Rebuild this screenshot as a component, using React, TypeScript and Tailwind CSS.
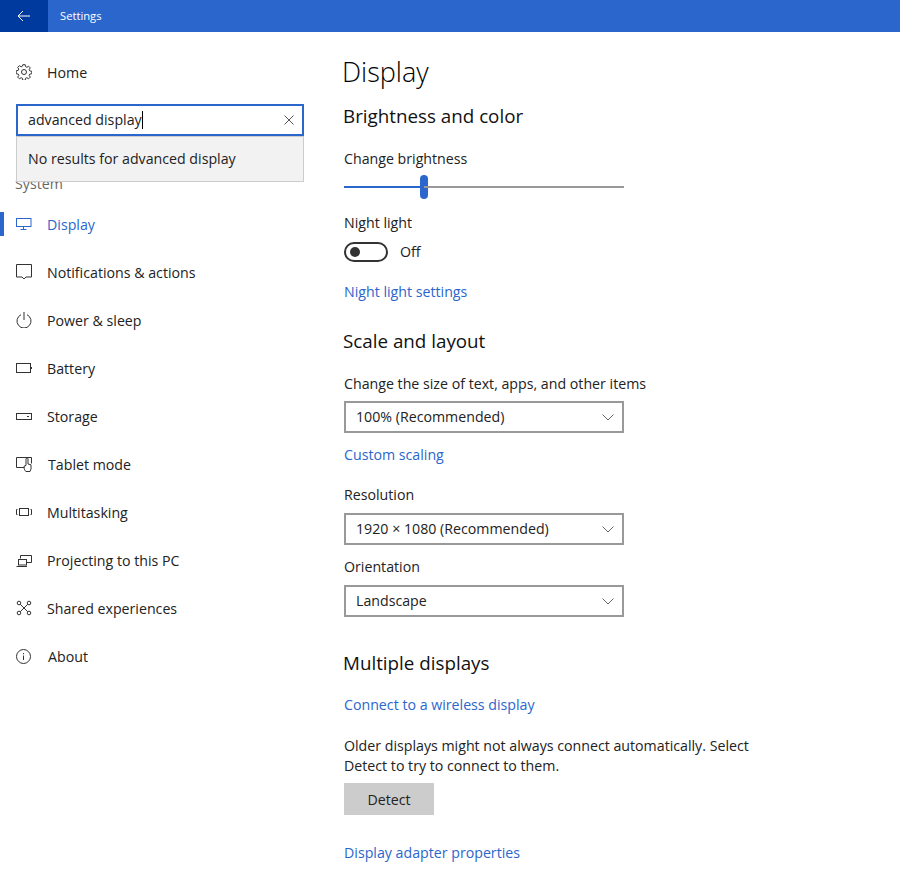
import type { ReactNode } from 'react';

const stroke = { fill: 'none', stroke: '#333', strokeWidth: 1 };

const icons: Record<string, ReactNode> = {
    display: (
        <g {...stroke} stroke="#2b66cc">
            <rect x="0.500" y="2.500" width="14.500" height="8" />
            <path d="M7.500 10.500v2.500M4.500 13.500h6" />
        </g>
    ),
    notifications: (
        <g {...stroke}>
            <path d="M.5.5h15V13H10l-2 2-2-2H.5z" />
        </g>
    ),
    power: (
        <g {...stroke}>
            <path d="M8 0v8M5 2.700a7 7 0 1 0 6 0" />
        </g>
    ),
    battery: (
        <g {...stroke}>
            <rect x="0.500" y="3.500" width="14" height="9" />
            <path d="M15.500 7v2" />
        </g>
    ),
    storage: (
        <g {...stroke}>
            <rect x="0.500" y="5.500" width="15" height="6" />
            <path d="M11 8.500h2" />
        </g>
    ),
    tablet: (
        <g {...stroke}>
            <path d="M8 11.500H.5v-10h15v6" />
            <path d="M10 15.500c-1-.8-1.800-2-1.800-3.200V10l1.800-.5V3a1 1 0 0 1 2 0v5l3 .8v4.200l-1 2.500z" fill="#fff" />
        </g>
    ),
    multitasking: (
        <g {...stroke}>
            <rect x="3.500" y="4.500" width="9" height="7" />
            <path d="M1.500 5.500h-1v5h1M14.500 5.500h1v5h-1" />
        </g>
    ),
    projecting: (
        <g {...stroke}>
            <path d="M4.500 6.500v-3h11v7h-5" />
            <rect x="2.500" y="7.500" width="8" height="5.500" fill="#fff" />
            <path d="M.5 14.500h10.500" />
        </g>
    ),
    shared: (
        <g {...stroke}>
            <circle cx="3" cy="3" r="1.800" />
            <circle cx="13" cy="3" r="1.800" />
            <circle cx="3" cy="13" r="1.800" />
            <circle cx="13" cy="13" r="1.800" />
            <path d="M4.300 4.300l7.400 7.400M11.700 4.300l-7.400 7.400" />
        </g>
    ),
    about: (
        <g {...stroke}>
            <circle cx="7.500" cy="8.500" r="7" />
            <path d="M7.500 7.500v4.500M7.500 5v1.200" />
        </g>
    ),
};

const navItems = [
    { id: 'display', label: 'Display', active: true },
    { id: 'notifications', label: 'Notifications & actions' },
    { id: 'power', label: 'Power & sleep' },
    { id: 'battery', label: 'Battery' },
    { id: 'storage', label: 'Storage' },
    { id: 'tablet', label: 'Tablet mode', nudge: true },
    { id: 'multitasking', label: 'Multitasking' },
    { id: 'projecting', label: 'Projecting to this PC' },
    { id: 'shared', label: 'Shared experiences' },
    { id: 'about', label: 'About', nudge: true },
];

const NavIcon = ({ id }: { id: string }) => (
    <svg viewBox="0 0 16 16" className="w-4 h-4 shrink-0">
        {icons[id]}
    </svg>
);

const GearIcon = () => (
    <svg viewBox="0 0 16 16" className="w-4 h-4 shrink-0" fill="none" stroke="#333" strokeWidth="1">
        <circle cx="8" cy="8" r="2.500" />
        <path d="M6.800.700h2.400l.4 2 1.300.6 1.700-1.100 1.700 1.700-1.100 1.700.6 1.300 2 .4v2.400l-2 .4-.6 1.300 1.100 1.700-1.700 1.700-1.700-1.100-1.300.6-.4 2H6.800l-.4-2-1.300-.6-1.700 1.100-1.700-1.700 1.100-1.700-.6-1.300-2-.4V6.800l2-.4.6-1.300-1.100-1.700 1.700-1.700 1.700 1.100 1.300-.6z" />
    </svg>
);

const Select = ({ value }: { value: string }) => (
    <div className="flex items-center justify-between w-[280px] h-8 border-2 border-[#999] pl-[10px] pr-[8px] text-[#222]">
        <span>{value}</span>
        <svg viewBox="0 0 12 7" className="w-3 h-[7px]" fill="none" stroke="#666" strokeWidth="1">
            <path d="M.5.500 6 6l5.500-5.500" />
        </svg>
    </div>
);

const Label = ({ children, className }: { children: ReactNode; className: string }) => (
    <div className={`h-5 leading-5 ${className}`}>{children}</div>
);

const Link = ({ children, className }: { children: ReactNode; className: string }) => (
    <div className={`h-5 leading-5 text-[#2b66cc] ${className}`}>{children}</div>
);

const App = () => {
    return (
        <div className="w-[900px] h-[884px] overflow-hidden bg-white text-[14.2px] text-[#222] font-['Open_Sans',sans-serif]">
            <header className="flex items-center h-8 bg-[#2b66cc] text-white">
                <div className="flex items-center justify-center w-12 h-8 bg-[#003a9e]">
                    <svg viewBox="0 0 16 16" className="w-4 h-4" fill="none" stroke="#fff" strokeWidth="1">
                        <path d="M14 8H2M7 3 2 8l5 5" />
                    </svg>
                </div>
                <span className="ml-3 text-[11.2px]">Settings</span>
            </header>

            <div className="flex">
                <aside className="relative w-[344px] shrink-0 pt-4">
                    <div className="flex items-center gap-[15px] h-12 pl-4">
                        <GearIcon />
                        <span className="pt-[2px]">Home</span>
                    </div>

                    <div className="relative mx-4 mt-2 w-[288px]">
                        <div className="flex items-center h-8 border-2 border-[#2b66cc] pl-[10px] pr-[8px] text-[#222]">
                            <span>advanced display</span>
                            <span className="w-px h-[18px] bg-black" />
                            <svg viewBox="0 0 10 10" className="ml-auto w-[10px] h-[10px]" fill="none" stroke="#555" strokeWidth="1">
                                <path d="M.5.500l9 9M9.500.500l-9 9" />
                            </svg>
                        </div>
                        <div className="absolute z-10 top-8 left-0 w-full h-[46px] flex items-center pl-[11px] bg-[#f2f2f2] border border-[#ccc]">
                            No results for advanced display
                        </div>
                    </div>

                    <div className="h-16 pt-[37px] pl-[15px] text-[#666]">System</div>

                    <nav>
                        {navItems.map((item) => (
                            <div
                                key={item.id}
                                className={`flex items-center gap-[15px] h-12 pl-4 ${item.active ? 'text-[#2b66cc]' : ''}`}
                            >
                                <NavIcon id={item.id} />
                                <span className={item.nudge ? 'pt-[2px] ml-px' : 'pt-[2px]'}>{item.label}</span>
                            </div>
                        ))}
                    </nav>
                    <div className="absolute left-0 top-[180px] w-1 h-6 bg-[#2b66cc]" />
                </aside>

                <main className="flex flex-col pt-[20px]">
                    <h1 className="-ml-[2px] h-10 leading-10 text-[27px] font-light text-black">Display</h1>
                    <h2 className="-ml-[1px] mt-2 h-8 leading-8 text-[18.800px] text-[#111]">Brightness and color</h2>

                    <Label className="mt-[17px]">Change brightness</Label>
                    <div className="relative flex items-center w-[280px] h-6 mt-[6px]">
                        <div className="w-[80px] h-[2px] bg-[#2b66cc]" />
                        <div className="w-2 h-6 rounded-full bg-[#2b66cc] shrink-0 -ml-1 mr-[-4px]" />
                        <div className="flex-1 h-[2px] bg-[#999]" />
                    </div>

                    <Label className="mt-[14px]">Night light</Label>
                    <div className="flex items-center gap-3 mt-[9px] h-5">
                        <div className="flex items-center w-11 h-5 rounded-full border-2 border-[#333] pl-[4px]">
                            <div className="w-[10px] h-[10px] rounded-full bg-[#333]" />
                        </div>
                        <span>Off</span>
                    </div>

                    <Link className="mt-[20px]">Night light settings</Link>

                    <h2 className="-ml-[1px] mt-[23px] h-8 leading-8 text-[18.800px] text-[#111]">Scale and layout</h2>
                    <Label className="mt-[17px]">Change the size of text, apps, and other items</Label>
                    <div className="mt-[7px]">
                        <Select value="100% (Recommended)" />
                    </div>
                    <Link className="mt-3">Custom scaling</Link>

                    <Label className="mt-5">Resolution</Label>
                    <div className="mt-2">
                        <Select value="1920 × 1080 (Recommended)" />
                    </div>
                    <Label className="mt-3">Orientation</Label>
                    <div className="mt-2">
                        <Select value="Landscape" />
                    </div>

                    <h2 className="-ml-[1px] mt-[30px] h-8 leading-8 text-[18.800px] text-[#111]">Multiple displays</h2>
                    <Link className="mt-[16px]">Connect to a wireless display</Link>
                    <div className="mt-[21px] w-[420px] leading-5">
                        Older displays might not always connect automatically. Select Detect to try to connect to them.
                    </div>
                    <button className="mt-[7px] w-[90px] h-8 pt-[2px] bg-[#ccc] text-[#222]">Detect</button>
                    <Link className="mt-[28px]">Display adapter properties</Link>
                </main>
            </div>
        </div>
    );
};

export default App;
